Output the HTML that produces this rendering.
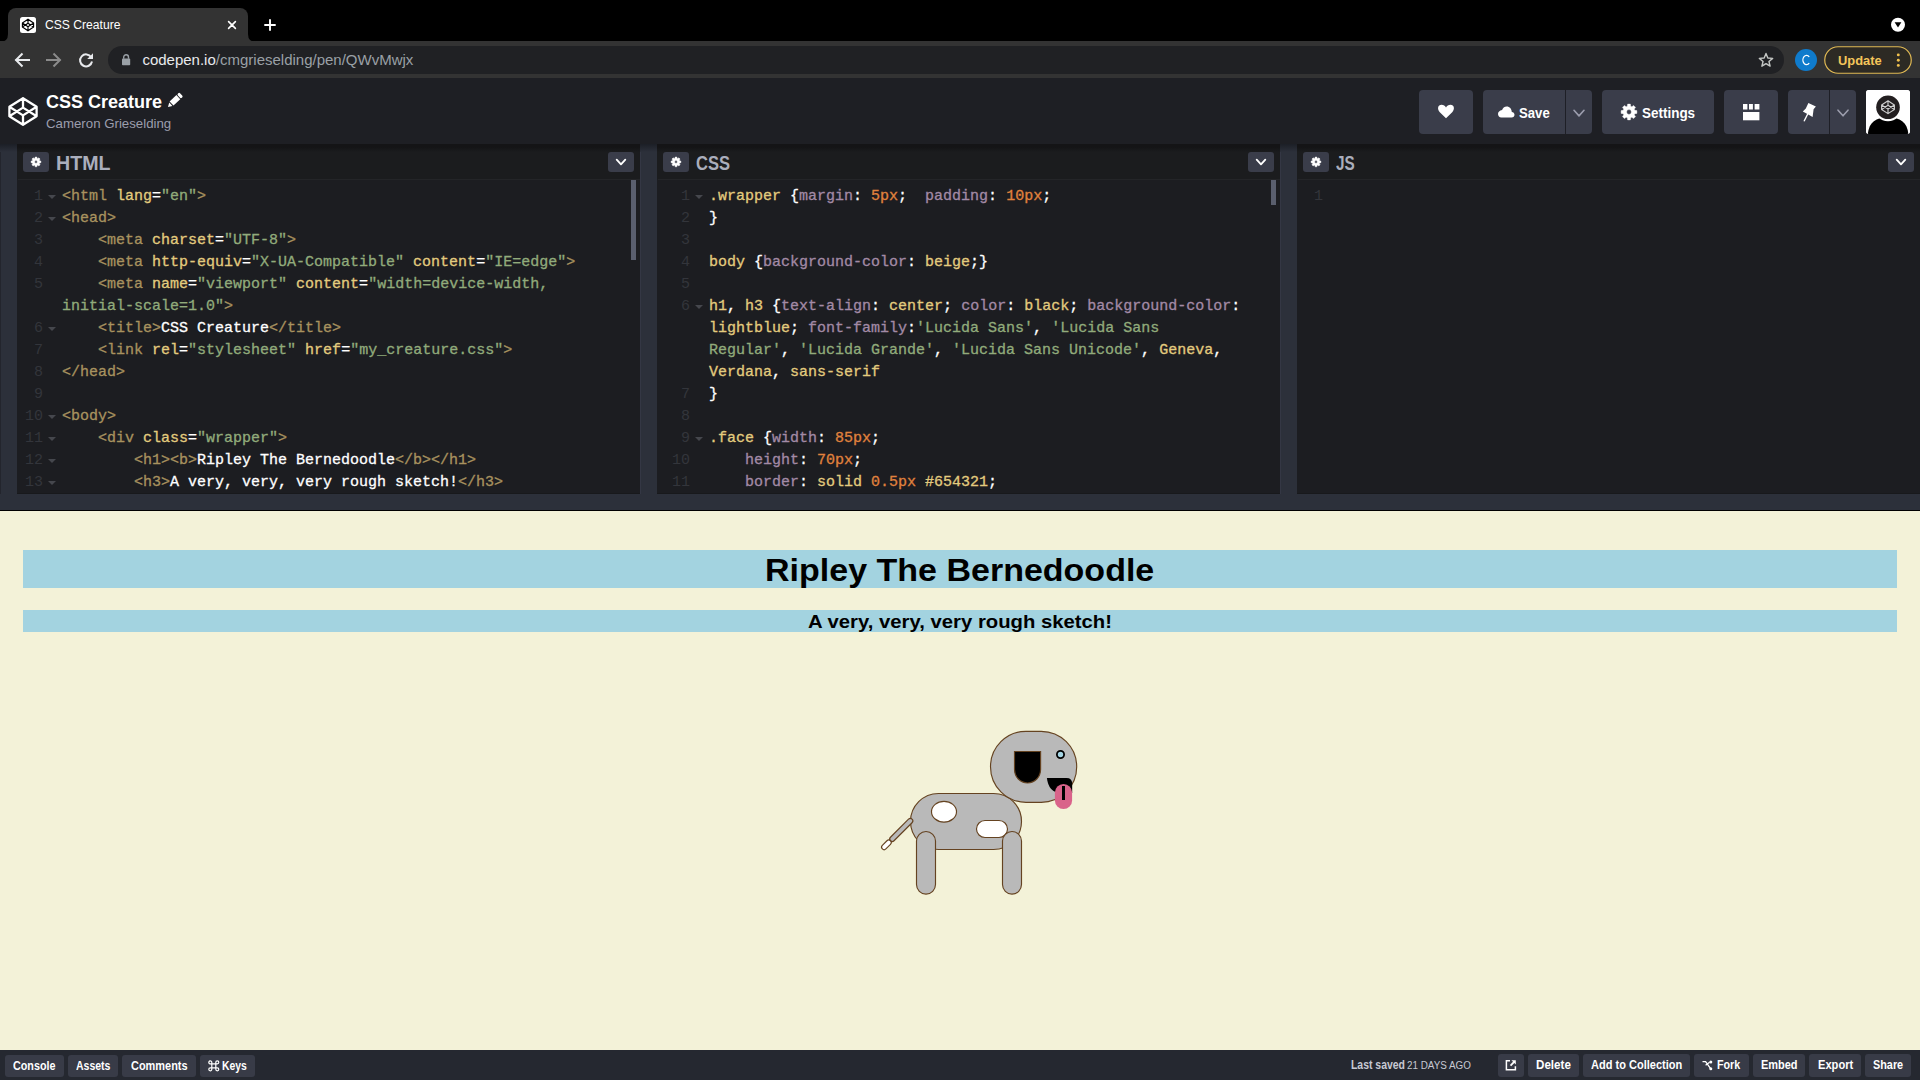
<!DOCTYPE html><html><head><meta charset='utf-8'><style>
*{box-sizing:border-box}
html,body{margin:0;padding:0}
body{width:1920px;height:1080px;overflow:hidden;position:relative;background:#000;font-family:"Liberation Sans",sans-serif}
.t{position:absolute;white-space:pre;line-height:normal;transform-origin:0 0}
.ln{position:absolute;width:40px;text-align:right;font-family:"Liberation Mono",monospace;font-size:15px;line-height:22px;color:#33353b}
.fold{position:absolute;width:0;height:0;border-left:4px solid transparent;border-right:4px solid transparent;border-top:4px solid #45474d}
.cl{position:absolute;white-space:pre;-webkit-text-stroke:0.3px currentColor;font-family:"Liberation Mono",monospace;font-size:15px;line-height:22px}
.btn{position:absolute;background:#3a3d4a;border-radius:4px}
.fbtn{position:absolute;background:#383b47;border-radius:3px}
</style></head><body>
<div style="position:absolute;left:0px;top:0px;width:1920px;height:42px;background:#000;"></div>
<div style="position:absolute;left:8px;top:8px;width:240px;height:34px;background:#333333;border-radius:8px 8px 0 0"></div>
<div style="position:absolute;left:0px;top:41px;width:1920px;height:37px;background:#333333;"></div>
<div style="position:absolute;left:108px;top:46px;width:1676px;height:28px;background:#202124;border-radius:14px"></div>
<div style="position:absolute;left:0px;top:78px;width:1920px;height:66px;background:#1e1f24;"></div>
<div style="position:absolute;left:0px;top:144px;width:1920px;height:350px;background:#2c303a;"></div>
<div style="position:absolute;left:0px;top:144px;width:1px;height:350px;background:#23252d;"></div>
<div style="position:absolute;left:17px;top:144px;width:623px;height:350px;background:#1c1d21;"></div>
<div style="position:absolute;left:17px;top:144px;width:623px;height:35px;background:#1b1c1e;"></div>
<div style="position:absolute;left:17px;top:144px;width:623px;height:8px;background:linear-gradient(#141416,#141416 40%,#1b1c1e);"></div>
<div style="position:absolute;left:18px;top:179px;width:622px;height:1px;background:#242528;"></div>
<div style="position:absolute;left:17px;top:493px;width:623px;height:1px;background:#18191c;"></div>
<div style="position:absolute;left:657px;top:144px;width:623px;height:350px;background:#1c1d21;"></div>
<div style="position:absolute;left:657px;top:144px;width:623px;height:35px;background:#1b1c1e;"></div>
<div style="position:absolute;left:657px;top:144px;width:623px;height:8px;background:linear-gradient(#141416,#141416 40%,#1b1c1e);"></div>
<div style="position:absolute;left:658px;top:179px;width:622px;height:1px;background:#242528;"></div>
<div style="position:absolute;left:657px;top:493px;width:623px;height:1px;background:#18191c;"></div>
<div style="position:absolute;left:1297px;top:144px;width:623px;height:350px;background:#1c1d21;"></div>
<div style="position:absolute;left:1297px;top:144px;width:623px;height:35px;background:#1b1c1e;"></div>
<div style="position:absolute;left:1297px;top:144px;width:623px;height:8px;background:linear-gradient(#141416,#141416 40%,#1b1c1e);"></div>
<div style="position:absolute;left:1298px;top:179px;width:622px;height:1px;background:#242528;"></div>
<div style="position:absolute;left:1297px;top:493px;width:623px;height:1px;background:#18191c;"></div>
<div style="position:absolute;left:640px;top:144px;width:1px;height:350px;background:#343744;"></div>
<div style="position:absolute;left:1280px;top:144px;width:1px;height:350px;background:#343744;"></div>
<div style="position:absolute;left:0px;top:144px;width:17px;height:8px;background:linear-gradient(#1c1f26,#2c303a);"></div>
<div style="position:absolute;left:640px;top:144px;width:17px;height:8px;background:linear-gradient(#1c1f26,#2c303a);"></div>
<div style="position:absolute;left:1280px;top:144px;width:17px;height:8px;background:linear-gradient(#1c1f26,#2c303a);"></div>
<div style="position:absolute;left:0px;top:494px;width:1920px;height:16px;background:#2c303a;"></div>
<div style="position:absolute;left:0px;top:510px;width:1920px;height:1px;background:#000;"></div>
<div style="position:absolute;left:0px;top:511px;width:1920px;height:539px;background:#f3f2d8;"></div>
<div style="position:absolute;left:0px;top:1050px;width:1920px;height:30px;background:#252830;"></div>
<div style="position:absolute;left:23px;top:550px;width:1874px;height:38px;background:#a3d3e0;"></div>
<div style="position:absolute;left:23px;top:610px;width:1874px;height:22px;background:#a3d3e0;"></div>
<div class="btn" style="left:1419px;top:90px;width:54px;height:44px"></div>
<div class="btn" style="left:1483px;top:90px;width:109px;height:44px"></div>
<div style="position:absolute;left:1565px;top:90px;width:1px;height:44px;background:#1e1f26;"></div>
<div class="btn" style="left:1602px;top:90px;width:112px;height:44px"></div>
<div class="btn" style="left:1724px;top:90px;width:54px;height:44px"></div>
<div class="btn" style="left:1788px;top:90px;width:68px;height:44px"></div>
<div style="position:absolute;left:1829px;top:90px;width:1px;height:44px;background:#1e1f26;"></div>
<div style="position:absolute;left:1866px;top:90px;width:44px;height:44px;background:#fff;border-radius:3px"></div>
<div class="btn" style="left:23px;top:152px;width:26px;height:20px;border-radius:3px"></div>
<div class="btn" style="left:608px;top:152px;width:26px;height:20px;border-radius:3px"></div>
<div class="btn" style="left:663px;top:152px;width:26px;height:20px;border-radius:3px"></div>
<div class="btn" style="left:1248px;top:152px;width:26px;height:20px;border-radius:3px"></div>
<div class="btn" style="left:1303px;top:152px;width:26px;height:20px;border-radius:3px"></div>
<div class="btn" style="left:1888px;top:152px;width:26px;height:20px;border-radius:3px"></div>
<div style="position:absolute;left:631px;top:180px;width:5px;height:80px;background:#5a5f6e;"></div>
<div style="position:absolute;left:1271px;top:180px;width:5px;height:25px;background:#5a5f6e;"></div>
<div class="fbtn" style="left:5px;top:1055px;width:59px;height:22px"></div>
<div class="fbtn" style="left:68px;top:1055px;width:50px;height:22px"></div>
<div class="fbtn" style="left:122px;top:1055px;width:74px;height:22px"></div>
<div class="fbtn" style="left:200px;top:1055px;width:55px;height:22px"></div>
<div class="fbtn" style="left:1498px;top:1054px;width:26px;height:23px"></div>
<div class="fbtn" style="left:1528px;top:1054px;width:51px;height:23px"></div>
<div class="fbtn" style="left:1583px;top:1054px;width:107px;height:23px"></div>
<div class="fbtn" style="left:1694px;top:1054px;width:55px;height:23px"></div>
<div class="fbtn" style="left:1753px;top:1054px;width:52px;height:23px"></div>
<div class="fbtn" style="left:1809px;top:1054px;width:52px;height:23px"></div>
<div class="fbtn" style="left:1865px;top:1054px;width:46px;height:23px"></div>
<div class="ln" style="left:3px;top:186px">1</div>
<div class="fold" style="left:48px;top:195px"></div>
<div class="cl" style="left:62px;top:186px"><span style="color:#a8925f">&lt;html</span><span style="color:#ffffff"> </span><span style="color:#e3cb7e">lang</span><span style="color:#ffffff">=</span><span style="color:#91ab7b">&quot;en&quot;</span><span style="color:#a8925f">&gt;</span></div>
<div class="ln" style="left:3px;top:208px">2</div>
<div class="fold" style="left:48px;top:217px"></div>
<div class="cl" style="left:62px;top:208px"><span style="color:#a8925f">&lt;head&gt;</span></div>
<div class="ln" style="left:3px;top:230px">3</div>
<div class="cl" style="left:62px;top:230px"><span style="color:#a8925f">    &lt;meta</span><span style="color:#ffffff"> </span><span style="color:#e3cb7e">charset</span><span style="color:#ffffff">=</span><span style="color:#91ab7b">&quot;UTF-8&quot;</span><span style="color:#a8925f">&gt;</span></div>
<div class="ln" style="left:3px;top:252px">4</div>
<div class="cl" style="left:62px;top:252px"><span style="color:#a8925f">    &lt;meta</span><span style="color:#ffffff"> </span><span style="color:#e3cb7e">http-equiv</span><span style="color:#ffffff">=</span><span style="color:#91ab7b">&quot;X-UA-Compatible&quot;</span><span style="color:#ffffff"> </span><span style="color:#e3cb7e">content</span><span style="color:#ffffff">=</span><span style="color:#91ab7b">&quot;IE=edge&quot;</span><span style="color:#a8925f">&gt;</span></div>
<div class="ln" style="left:3px;top:274px">5</div>
<div class="cl" style="left:62px;top:274px"><span style="color:#a8925f">    &lt;meta</span><span style="color:#ffffff"> </span><span style="color:#e3cb7e">name</span><span style="color:#ffffff">=</span><span style="color:#91ab7b">&quot;viewport&quot;</span><span style="color:#ffffff"> </span><span style="color:#e3cb7e">content</span><span style="color:#ffffff">=</span><span style="color:#91ab7b">&quot;width=device-width,</span></div>
<div class="cl" style="left:62px;top:296px"><span style="color:#91ab7b">initial-scale=1.0&quot;</span><span style="color:#a8925f">&gt;</span></div>
<div class="ln" style="left:3px;top:318px">6</div>
<div class="fold" style="left:48px;top:327px"></div>
<div class="cl" style="left:62px;top:318px"><span style="color:#a8925f">    &lt;title&gt;</span><span style="color:#ffffff">CSS Creature</span><span style="color:#a8925f">&lt;/title&gt;</span></div>
<div class="ln" style="left:3px;top:340px">7</div>
<div class="cl" style="left:62px;top:340px"><span style="color:#a8925f">    &lt;link</span><span style="color:#ffffff"> </span><span style="color:#e3cb7e">rel</span><span style="color:#ffffff">=</span><span style="color:#91ab7b">&quot;stylesheet&quot;</span><span style="color:#ffffff"> </span><span style="color:#e3cb7e">href</span><span style="color:#ffffff">=</span><span style="color:#91ab7b">&quot;my_creature.css&quot;</span><span style="color:#a8925f">&gt;</span></div>
<div class="ln" style="left:3px;top:362px">8</div>
<div class="cl" style="left:62px;top:362px"><span style="color:#a8925f">&lt;/head&gt;</span></div>
<div class="ln" style="left:3px;top:384px">9</div>
<div class="cl" style="left:62px;top:384px"></div>
<div class="ln" style="left:3px;top:406px">10</div>
<div class="fold" style="left:48px;top:415px"></div>
<div class="cl" style="left:62px;top:406px"><span style="color:#a8925f">&lt;body&gt;</span></div>
<div class="ln" style="left:3px;top:428px">11</div>
<div class="fold" style="left:48px;top:437px"></div>
<div class="cl" style="left:62px;top:428px"><span style="color:#a8925f">    &lt;div</span><span style="color:#ffffff"> </span><span style="color:#e3cb7e">class</span><span style="color:#ffffff">=</span><span style="color:#91ab7b">&quot;wrapper&quot;</span><span style="color:#a8925f">&gt;</span></div>
<div class="ln" style="left:3px;top:450px">12</div>
<div class="fold" style="left:48px;top:459px"></div>
<div class="cl" style="left:62px;top:450px"><span style="color:#a8925f">        &lt;h1&gt;&lt;b&gt;</span><span style="color:#ffffff">Ripley The Bernedoodle</span><span style="color:#a8925f">&lt;/b&gt;&lt;/h1&gt;</span></div>
<div class="ln" style="left:3px;top:472px">13</div>
<div class="fold" style="left:48px;top:481px"></div>
<div class="cl" style="left:62px;top:472px"><span style="color:#a8925f">        &lt;h3&gt;</span><span style="color:#ffffff">A very, very, very rough sketch!</span><span style="color:#a8925f">&lt;/h3&gt;</span></div>
<div class="ln" style="left:650px;top:186px">1</div>
<div class="fold" style="left:695px;top:195px"></div>
<div class="cl" style="left:709px;top:186px"><span style="color:#e3cb7e">.wrapper</span><span style="color:#ffffff"> {</span><span style="color:#a38aa6">margin</span><span style="color:#ffffff">: </span><span style="color:#e0823d">5px</span><span style="color:#ffffff">;  </span><span style="color:#a38aa6">padding</span><span style="color:#ffffff">: </span><span style="color:#e0823d">10px</span><span style="color:#ffffff">;</span></div>
<div class="ln" style="left:650px;top:208px">2</div>
<div class="cl" style="left:709px;top:208px"><span style="color:#ffffff">}</span></div>
<div class="ln" style="left:650px;top:230px">3</div>
<div class="cl" style="left:709px;top:230px"></div>
<div class="ln" style="left:650px;top:252px">4</div>
<div class="cl" style="left:709px;top:252px"><span style="color:#e3cb7e">body</span><span style="color:#ffffff"> {</span><span style="color:#a38aa6">background-color</span><span style="color:#ffffff">: </span><span style="color:#e3cb7e">beige</span><span style="color:#ffffff">;}</span></div>
<div class="ln" style="left:650px;top:274px">5</div>
<div class="cl" style="left:709px;top:274px"></div>
<div class="ln" style="left:650px;top:296px">6</div>
<div class="fold" style="left:695px;top:305px"></div>
<div class="cl" style="left:709px;top:296px"><span style="color:#e3cb7e">h1</span><span style="color:#ffffff">, </span><span style="color:#e3cb7e">h3</span><span style="color:#ffffff"> {</span><span style="color:#a38aa6">text-align</span><span style="color:#ffffff">: </span><span style="color:#e3cb7e">center</span><span style="color:#ffffff">; </span><span style="color:#a38aa6">color</span><span style="color:#ffffff">: </span><span style="color:#e3cb7e">black</span><span style="color:#ffffff">; </span><span style="color:#a38aa6">background-color</span><span style="color:#ffffff">:</span></div>
<div class="cl" style="left:709px;top:318px"><span style="color:#e3cb7e">lightblue</span><span style="color:#ffffff">; </span><span style="color:#a38aa6">font-family</span><span style="color:#ffffff">:</span><span style="color:#91ab7b">&#x27;Lucida Sans&#x27;</span><span style="color:#ffffff">, </span><span style="color:#91ab7b">&#x27;Lucida Sans</span></div>
<div class="cl" style="left:709px;top:340px"><span style="color:#91ab7b">Regular&#x27;</span><span style="color:#ffffff">, </span><span style="color:#91ab7b">&#x27;Lucida Grande&#x27;</span><span style="color:#ffffff">, </span><span style="color:#91ab7b">&#x27;Lucida Sans Unicode&#x27;</span><span style="color:#ffffff">, </span><span style="color:#e3cb7e">Geneva</span><span style="color:#ffffff">,</span></div>
<div class="cl" style="left:709px;top:362px"><span style="color:#e3cb7e">Verdana</span><span style="color:#ffffff">, </span><span style="color:#e3cb7e">sans-serif</span></div>
<div class="ln" style="left:650px;top:384px">7</div>
<div class="cl" style="left:709px;top:384px"><span style="color:#ffffff">}</span></div>
<div class="ln" style="left:650px;top:406px">8</div>
<div class="cl" style="left:709px;top:406px"></div>
<div class="ln" style="left:650px;top:428px">9</div>
<div class="fold" style="left:695px;top:437px"></div>
<div class="cl" style="left:709px;top:428px"><span style="color:#e3cb7e">.face</span><span style="color:#ffffff"> {</span><span style="color:#a38aa6">width</span><span style="color:#ffffff">: </span><span style="color:#e0823d">85px</span><span style="color:#ffffff">;</span></div>
<div class="ln" style="left:650px;top:450px">10</div>
<div class="cl" style="left:709px;top:450px"><span style="color:#a38aa6">    height</span><span style="color:#ffffff">: </span><span style="color:#e0823d">70px</span><span style="color:#ffffff">;</span></div>
<div class="ln" style="left:650px;top:472px">11</div>
<div class="cl" style="left:709px;top:472px"><span style="color:#a38aa6">    border</span><span style="color:#ffffff">: </span><span style="color:#e3cb7e">solid</span><span style="color:#ffffff"> </span><span style="color:#e0823d">0.5px</span><span style="color:#ffffff"> </span><span style="color:#e3cb7e">#654321</span><span style="color:#ffffff">;</span></div>
<div class="ln" style="left:1283px;top:186px">1</div>
<svg style="position:absolute;left:0;top:0" width="1920" height="1080"><path d="M0,42 L0,42 Q8,42 8,34 L8,42 Z" fill="#333333"/><path d="M248,34 Q248,42 256,42 L248,42 Z" fill="#333333"/><rect x="20" y="17" width="16" height="16" rx="2.5" fill="#fff"/><path d="M28.00,19.20 L33.60,22.95 L28.00,26.69 L22.40,22.95 Z M28.00,23.31 L33.60,27.05 L28.00,30.80 L22.40,27.05 Z M22.40,22.95 L22.40,27.05 M33.60,22.95 L33.60,27.05 M28.00,19.20 L28.00,23.31 M28.00,26.69 L28.00,30.80" fill="none" stroke="#000" stroke-width="1.15" stroke-linejoin="round" stroke-linecap="round"/><path d="M228.6,21.6 L235.4,28.4 M235.4,21.6 L228.6,28.4" stroke="#ffffff" stroke-width="1.6" stroke-linecap="round"/><path d="M264.3,25 H275.7 M270,19.3 V30.7" stroke="#ffffff" stroke-width="1.9"/><circle cx="1898" cy="24.8" r="7" fill="#fff"/><path d="M1894.6,22.3 H1901.4 L1898,27.6 Z" fill="#000"/><path d="M29,60 H16.2 M21.8,54.2 L16,60 L21.8,65.8" fill="none" stroke="#e8eaed" stroke-width="2" stroke-linecap="square"/><path d="M47,60 H59.8 M54.2,54.2 L60,60 L54.2,65.8" fill="none" stroke="#8b8b8b" stroke-width="2" stroke-linecap="square"/><path d="M91.2,57.2 A6,6 0 1 0 92,61.5" fill="none" stroke="#e8eaed" stroke-width="2"/><path d="M93,53.2 V59 H87.2 Z" fill="#e8eaed"/><rect x="122" y="58.6" width="8.2" height="6.6" rx="0.8" fill="#9aa0a6"/><path d="M123.7,58.8 V57.2 A2.4,2.4 0 0 1 128.5,57.2 V58.8" fill="none" stroke="#9aa0a6" stroke-width="1.4"/><path d="M1766.00,53.50 L1767.82,57.99 L1772.66,58.34 L1768.95,61.46 L1770.11,66.16 L1766.00,63.60 L1761.89,66.16 L1763.05,61.46 L1759.34,58.34 L1764.18,57.99Z" fill="none" stroke="#c4c7c5" stroke-width="1.4" stroke-linejoin="round"/><circle cx="1806" cy="60" r="11" fill="#0f7bcc"/><path d="M1809.2,56.9 A3.6,4.6 0 1 0 1809.2,63.1" fill="none" stroke="#fff" stroke-width="1.3"/><rect x="1824.75" y="46.75" width="86.5" height="26.5" rx="13.25" fill="#2d2a24" stroke="#e0b954" stroke-width="1.2"/><circle cx="1898.3" cy="54.9" r="1.45" fill="#f2c14e"/><circle cx="1898.3" cy="60.2" r="1.45" fill="#f2c14e"/><circle cx="1898.3" cy="65.4" r="1.45" fill="#f2c14e"/><path d="M23.00,98.20 L36.60,106.79 L23.00,115.38 L9.40,106.79 Z M23.00,107.62 L36.60,116.21 L23.00,124.80 L9.40,116.21 Z M9.40,106.79 L9.40,116.21 M36.60,106.79 L36.60,116.21 M23.00,98.20 L23.00,107.62 M23.00,115.38 L23.00,124.80" fill="none" stroke="#ffffff" stroke-width="2.3" stroke-linejoin="round" stroke-linecap="round"/><g transform="translate(168,106.9) rotate(-43.4)"><path d="M0,0 L3.9,-2.3 L3.9,2.3 Z" fill="#fff"/><rect x="4.9" y="-2.8" width="9.3" height="5.6" fill="#fff"/><rect x="15" y="-2.8" width="3.2" height="5.6" rx="1.4" fill="#fff"/></g><path d="M1446,118.3 L1439.8,112.2 C1437,109.4 1437.6,104.8 1441.6,104.8 C1443.6,104.8 1445,106 1446,107.4 C1447,106 1448.4,104.8 1450.4,104.8 C1454.4,104.8 1455,109.4 1452.2,112.2 Z" fill="#fff"/><path d="M1501.3,117.6 H1511.6 C1513.4,117.6 1514.5,116.4 1514.5,114.8 C1514.5,113.2 1513.3,112 1511.8,112 C1511.8,108.8 1509.6,106.4 1506.7,106.4 C1504.4,106.4 1502.6,108 1502.1,110.1 C1499.6,110.4 1498,112.2 1498,114.1 C1498,116 1499.4,117.6 1501.3,117.6 Z" fill="#fff"/><path d="M1574.00,110.30 L1579.00,115.90 L1584.00,110.30" fill="none" stroke="#9b9dad" stroke-width="1.6" stroke-linecap="round" stroke-linejoin="round"/><path d="M1627.33,106.24 L1627.62,104.12 L1630.38,104.12 L1630.67,106.24 L1631.89,106.74 L1633.60,105.45 L1635.55,107.40 L1634.26,109.11 L1634.76,110.33 L1636.88,110.62 L1636.88,113.38 L1634.76,113.67 L1634.26,114.89 L1635.55,116.60 L1633.60,118.55 L1631.89,117.26 L1630.67,117.76 L1630.38,119.88 L1627.62,119.88 L1627.33,117.76 L1626.11,117.26 L1624.40,118.55 L1622.45,116.60 L1623.74,114.89 L1623.24,113.67 L1621.12,113.38 L1621.12,110.62 L1623.24,110.33 L1623.74,109.11 L1622.45,107.40 L1624.40,105.45 L1626.11,106.74Z M1631.40,112.00 A2.4,2.4 0 1 0 1626.60,112.00 A2.4,2.4 0 1 0 1631.40,112.00Z" fill="#ffffff" fill-rule="evenodd" stroke="#ffffff" stroke-width="0.4" stroke-linejoin="round"/><rect x="1743" y="104" width="4.4" height="5.5" fill="#fff"/><rect x="1749" y="104" width="3.9" height="5.5" fill="#fff"/><rect x="1754.6" y="104" width="4.8" height="5.5" fill="#fff"/><rect x="1743" y="112" width="16.4" height="8.3" fill="#fff"/><path d="M1808.4,102.9 L1815.9,106.4 L1813.6,109.2 L1812.6,117.1 L1807.8,114.2 L1802.8,111.5 L1805.8,108.6 Z" fill="#fff"/><path d="M1807.6,114.3 L1804.3,120.8" stroke="#fff" stroke-width="1.4" stroke-linecap="round"/><path d="M1838.00,110.20 L1843.00,115.80 L1848.00,110.20" fill="none" stroke="#9b9dad" stroke-width="1.6" stroke-linecap="round" stroke-linejoin="round"/><clipPath id="av"><rect x="1866" y="90" width="44" height="44" rx="3"/></clipPath><g clip-path="url(#av)"><rect x="1866" y="90" width="44" height="44" fill="#fff"/><path d="M1867.8,134 C1869,122 1876,117.2 1888,117.2 C1900,117.2 1907.2,122 1908.4,134 Z" fill="#000"/><circle cx="1888" cy="107.3" r="13.9" fill="#fff"/><circle cx="1888" cy="107.3" r="11.8" fill="#231f20"/></g><path d="M1888.00,100.80 L1894.40,104.93 L1888.00,109.07 L1881.60,104.93 Z M1888.00,105.33 L1894.40,109.47 L1888.00,113.60 L1881.60,109.47 Z M1881.60,104.93 L1881.60,109.47 M1894.40,104.93 L1894.40,109.47 M1888.00,100.80 L1888.00,105.33 M1888.00,109.07 L1888.00,113.60" fill="none" stroke="#cfcfcf" stroke-width="1.1" stroke-linejoin="round" stroke-linecap="round"/><path d="M34.94,158.25 L35.14,156.97 L36.86,156.97 L37.06,158.25 L37.83,158.57 L38.88,157.81 L40.09,159.02 L39.33,160.07 L39.65,160.84 L40.93,161.04 L40.93,162.76 L39.65,162.96 L39.33,163.73 L40.09,164.78 L38.88,165.99 L37.83,165.23 L37.06,165.55 L36.86,166.83 L35.14,166.83 L34.94,165.55 L34.17,165.23 L33.12,165.99 L31.91,164.78 L32.67,163.73 L32.35,162.96 L31.07,162.76 L31.07,161.04 L32.35,160.84 L32.67,160.07 L31.91,159.02 L33.12,157.81 L34.17,158.57Z M37.30,161.90 A1.3,1.3 0 1 0 34.70,161.90 A1.3,1.3 0 1 0 37.30,161.90Z" fill="#ffffff" fill-rule="evenodd" stroke="#ffffff" stroke-width="0.4" stroke-linejoin="round"/><path d="M616.70,159.60 L621.00,164.40 L625.30,159.60" fill="none" stroke="#ffffff" stroke-width="1.8" stroke-linecap="round" stroke-linejoin="round"/><path d="M674.94,158.25 L675.14,156.97 L676.86,156.97 L677.06,158.25 L677.83,158.57 L678.88,157.81 L680.09,159.02 L679.33,160.07 L679.65,160.84 L680.93,161.04 L680.93,162.76 L679.65,162.96 L679.33,163.73 L680.09,164.78 L678.88,165.99 L677.83,165.23 L677.06,165.55 L676.86,166.83 L675.14,166.83 L674.94,165.55 L674.17,165.23 L673.12,165.99 L671.91,164.78 L672.67,163.73 L672.35,162.96 L671.07,162.76 L671.07,161.04 L672.35,160.84 L672.67,160.07 L671.91,159.02 L673.12,157.81 L674.17,158.57Z M677.30,161.90 A1.3,1.3 0 1 0 674.70,161.90 A1.3,1.3 0 1 0 677.30,161.90Z" fill="#ffffff" fill-rule="evenodd" stroke="#ffffff" stroke-width="0.4" stroke-linejoin="round"/><path d="M1256.70,159.60 L1261.00,164.40 L1265.30,159.60" fill="none" stroke="#ffffff" stroke-width="1.8" stroke-linecap="round" stroke-linejoin="round"/><path d="M1314.94,158.25 L1315.14,156.97 L1316.86,156.97 L1317.06,158.25 L1317.83,158.57 L1318.88,157.81 L1320.09,159.02 L1319.33,160.07 L1319.65,160.84 L1320.93,161.04 L1320.93,162.76 L1319.65,162.96 L1319.33,163.73 L1320.09,164.78 L1318.88,165.99 L1317.83,165.23 L1317.06,165.55 L1316.86,166.83 L1315.14,166.83 L1314.94,165.55 L1314.17,165.23 L1313.12,165.99 L1311.91,164.78 L1312.67,163.73 L1312.35,162.96 L1311.07,162.76 L1311.07,161.04 L1312.35,160.84 L1312.67,160.07 L1311.91,159.02 L1313.12,157.81 L1314.17,158.57Z M1317.30,161.90 A1.3,1.3 0 1 0 1314.70,161.90 A1.3,1.3 0 1 0 1317.30,161.90Z" fill="#ffffff" fill-rule="evenodd" stroke="#ffffff" stroke-width="0.4" stroke-linejoin="round"/><path d="M1896.70,159.60 L1901.00,164.40 L1905.30,159.60" fill="none" stroke="#ffffff" stroke-width="1.8" stroke-linecap="round" stroke-linejoin="round"/><path d="M209.6,1063.6 H217.6 M209.6,1067.6 H217.6 M211.6,1061.6 V1069.6 M215.6,1061.6 V1069.6" stroke="none"/><path d="M211.8,1063.8 H215.8 V1067.8 H211.8 Z M211.8,1063.8 H210.8 A1.5,1.5 0 1 1 211.8,1062.3 Z M215.8,1063.8 V1062.3 A1.5,1.5 0 1 1 217.3,1063.8 Z M215.8,1067.8 H217.3 A1.5,1.5 0 1 1 215.8,1069.3 Z M211.8,1067.8 V1069.3 A1.5,1.5 0 1 1 210.3,1067.8 Z" fill="none" stroke="#fff" stroke-width="1.2"/><path d="M1510,1060.8 H1506.4 V1069.8 H1515.4 V1066.2" fill="none" stroke="#fff" stroke-width="1.5"/><path d="M1515.8,1060.2 V1064.6 L1514.3,1063.1 L1511.2,1066.2 L1509.9,1064.9 L1513,1061.8 L1511.4,1060.2 Z" fill="#fff"/><path d="M1702.5,1061.6 H1705.6 L1710.6,1068.6 M1705.6,1065.2 L1709.6,1062.2" fill="none" stroke="#fff" stroke-width="1.3"/><circle cx="1710.8" cy="1062" r="1.5" fill="#fff"/><circle cx="1710.8" cy="1068.8" r="1.5" fill="#fff"/><rect x="910.5" y="793.5" width="111" height="56" rx="28" fill="#b9b9b9" stroke="#654321" stroke-width="1.15"/><g transform="translate(897.2,834.05) rotate(-45)"><rect x="-9.5" y="-2.5" width="30.5" height="5" rx="2.5" fill="#b9b9b9" stroke="#654321" stroke-width="1.15"/><rect x="-21" y="-2.5" width="11.5" height="5" rx="2.5" fill="#fff" stroke="#654321" stroke-width="1.15"/></g><ellipse cx="944" cy="811.7" rx="12.5" ry="10.4" fill="#fff" stroke="#654321" stroke-width="1.15"/><rect x="976.5" y="820.5" width="31" height="17" rx="8.5" fill="#fff" stroke="#654321" stroke-width="1.15"/><rect x="916.5" y="831.5" width="19" height="62.6" rx="9.5" fill="#b9b9b9" stroke="#654321" stroke-width="1.15"/><rect x="1002.5" y="831.5" width="19" height="62.6" rx="9.5" fill="#b9b9b9" stroke="#654321" stroke-width="1.15"/><rect x="990.5" y="731.3" width="86.2" height="71" rx="35.5" fill="#b9b9b9" stroke="#654321" stroke-width="1.15"/><path d="M1014.5,751.5 H1040.6 V769.5 A13.05,13.5 0 0 1 1014.5,769.5 Z" fill="#000" stroke="#654321" stroke-width="1.15"/><circle cx="1060.5" cy="754.5" r="3.6" fill="#a4d4e3" stroke="#000" stroke-width="1.8"/><path d="M1046.9,777.9 H1066.5 Q1072.2,777.9 1072.2,783.5 V793 H1061 Q1048.5,792.5 1046.9,777.9 Z" fill="#000"/><rect x="1054.9" y="783.9" width="17.2" height="25.2" rx="8.6" fill="#d9638a"/><rect x="1062" y="786" width="3" height="14" fill="#000"/></svg>
<div class="t" style="left:44.50px;top:18.20px;font-size:12.5px;font-weight:normal;color:#ffffff;font-family:'Liberation Sans';transform:scaleX(0.9697);">CSS Creature</div>
<div class="t" style="left:142.40px;top:50.90px;font-size:15px;font-weight:normal;color:#e8eaed;font-family:'Liberation Sans';">codepen.io</div>
<div class="t" style="left:1837.50px;top:52.70px;font-size:13px;font-weight:bold;color:#f4c55a;font-family:'Liberation Sans';transform:scaleX(0.9925);">Update</div>
<div class="t" style="left:46.40px;top:90.80px;font-size:19px;font-weight:bold;color:#ffffff;font-family:'Liberation Sans';transform:scaleX(0.9481);">CSS Creature</div>
<div class="t" style="left:46.00px;top:115.80px;font-size:13px;font-weight:normal;color:#9b9dad;font-family:'Liberation Sans';transform:scaleX(1.0195);">Cameron Grieselding</div>
<div class="t" style="left:1519.00px;top:103.90px;font-size:15px;font-weight:bold;color:#ffffff;font-family:'Liberation Sans';transform:scaleX(0.8763);">Save</div>
<div class="t" style="left:1642.40px;top:103.90px;font-size:15px;font-weight:bold;color:#ffffff;font-family:'Liberation Sans';transform:scaleX(0.8975);">Settings</div>
<div class="t" style="left:55.79px;top:152.00px;font-size:19.5px;font-weight:bold;color:#aaaebc;font-family:'Liberation Sans';transform:scaleX(1.0068);">HTML</div>
<div class="t" style="left:696.00px;top:152.00px;font-size:19.5px;font-weight:bold;color:#aaaebc;font-family:'Liberation Sans';transform:scaleX(0.8481);">CSS</div>
<div class="t" style="left:1336.00px;top:152.00px;font-size:19.5px;font-weight:bold;color:#aaaebc;font-family:'Liberation Sans';transform:scaleX(0.7842);">JS</div>
<div class="t" style="left:765.07px;top:552.00px;font-size:32px;font-weight:bold;color:#000;font-family:'Liberation Sans';transform:scaleX(1.0628);">Ripley The Bernedoodle</div>
<div class="t" style="left:807.80px;top:610.80px;font-size:18.72px;font-weight:bold;color:#000;font-family:'Liberation Sans';transform:scaleX(1.0844);">A very, very, very rough sketch!</div>
<div class="t" style="left:12.90px;top:1058.90px;font-size:12.3px;font-weight:bold;color:#ffffff;font-family:'Liberation Sans';transform:scaleX(0.8753);">Console</div>
<div class="t" style="left:75.80px;top:1058.90px;font-size:12.3px;font-weight:bold;color:#ffffff;font-family:'Liberation Sans';transform:scaleX(0.8545);">Assets</div>
<div class="t" style="left:130.60px;top:1058.90px;font-size:12.3px;font-weight:bold;color:#ffffff;font-family:'Liberation Sans';transform:scaleX(0.8900);">Comments</div>
<div class="t" style="left:221.90px;top:1058.90px;font-size:12.3px;font-weight:bold;color:#ffffff;font-family:'Liberation Sans';transform:scaleX(0.8458);">Keys</div>
<div class="t" style="left:1350.70px;top:1057.80px;font-size:12.3px;font-weight:bold;color:#c7c9d3;font-family:'Liberation Sans';transform:scaleX(0.8484);">Last saved</div>
<div class="t" style="left:1407.00px;top:1059.80px;font-size:10px;font-weight:normal;color:#c7c9d3;font-family:'Liberation Sans';transform:scaleX(0.9860);">21 DAYS AGO</div>
<div class="t" style="left:1536.00px;top:1057.90px;font-size:12.3px;font-weight:bold;color:#ffffff;font-family:'Liberation Sans';transform:scaleX(0.9442);">Delete</div>
<div class="t" style="left:1591.20px;top:1057.90px;font-size:12.3px;font-weight:bold;color:#ffffff;font-family:'Liberation Sans';transform:scaleX(0.8966);">Add to Collection</div>
<div class="t" style="left:1716.60px;top:1057.90px;font-size:12.3px;font-weight:bold;color:#ffffff;font-family:'Liberation Sans';transform:scaleX(0.8729);">Fork</div>
<div class="t" style="left:1760.70px;top:1057.90px;font-size:12.3px;font-weight:bold;color:#ffffff;font-family:'Liberation Sans';transform:scaleX(0.8917);">Embed</div>
<div class="t" style="left:1817.50px;top:1057.90px;font-size:12.3px;font-weight:bold;color:#ffffff;font-family:'Liberation Sans';transform:scaleX(0.9035);">Export</div>
<div class="t" style="left:1872.60px;top:1057.90px;font-size:12.3px;font-weight:bold;color:#ffffff;font-family:'Liberation Sans';transform:scaleX(0.8824);">Share</div>
<div class="t" style="left:215.80px;top:50.90px;font-size:15px;color:#9aa0a6;">/cmgrieselding/pen/QWvMwjx</div>
</body></html>
